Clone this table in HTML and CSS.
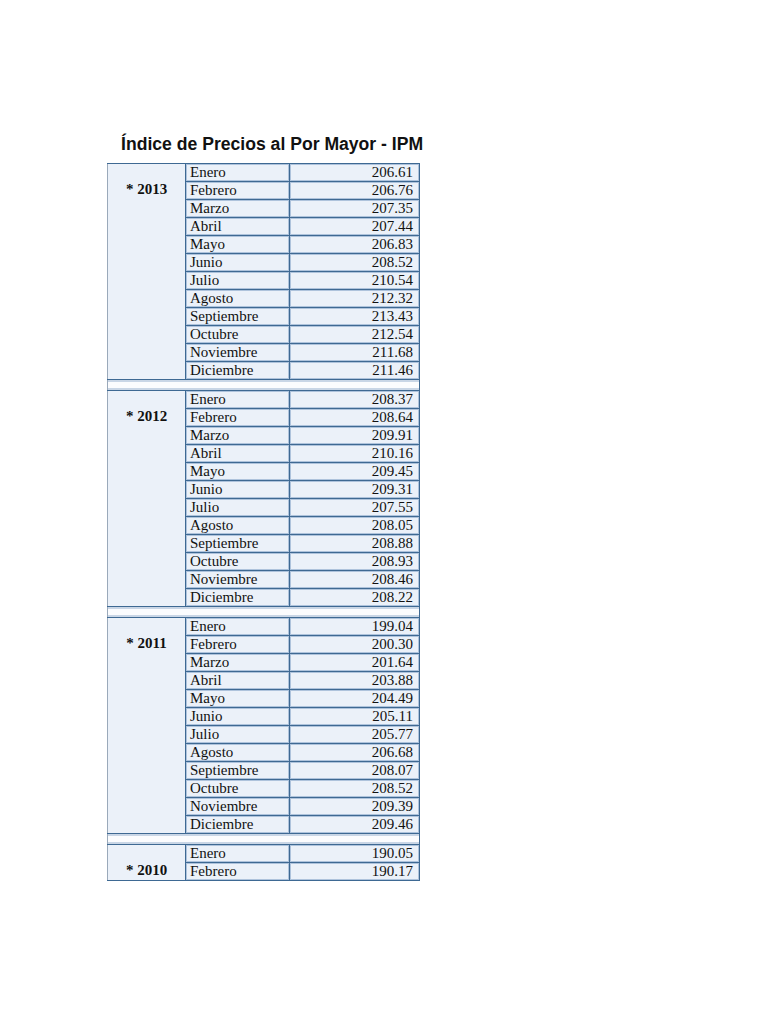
FILE: index.html
```html
<!DOCTYPE html>
<html lang="es">
<head>
<meta charset="utf-8">
<title>Índice de Precios al Por Mayor - IPM</title>
<link rel="stylesheet" href="styles.css">
</head>
<body>
<div class="page">
  <h1 class="title">Índice de Precios al Por Mayor - IPM</h1>
  <table class="ipm">
    <tbody>
      <tr><td class="year" rowspan="12">* 2013</td><td class="month">Enero</td><td class="val">206.61</td></tr>
      <tr><td class="month">Febrero</td><td class="val">206.76</td></tr>
      <tr><td class="month">Marzo</td><td class="val">207.35</td></tr>
      <tr><td class="month">Abril</td><td class="val">207.44</td></tr>
      <tr><td class="month">Mayo</td><td class="val">206.83</td></tr>
      <tr><td class="month">Junio</td><td class="val">208.52</td></tr>
      <tr><td class="month">Julio</td><td class="val">210.54</td></tr>
      <tr><td class="month">Agosto</td><td class="val">212.32</td></tr>
      <tr><td class="month">Septiembre</td><td class="val">213.43</td></tr>
      <tr><td class="month">Octubre</td><td class="val">212.54</td></tr>
      <tr><td class="month">Noviembre</td><td class="val">211.68</td></tr>
      <tr><td class="month">Diciembre</td><td class="val">211.46</td></tr>
      <tr class="sep"><td colspan="3"></td></tr>

      <tr><td class="year" rowspan="12">* 2012</td><td class="month">Enero</td><td class="val">208.37</td></tr>
      <tr><td class="month">Febrero</td><td class="val">208.64</td></tr>
      <tr><td class="month">Marzo</td><td class="val">209.91</td></tr>
      <tr><td class="month">Abril</td><td class="val">210.16</td></tr>
      <tr><td class="month">Mayo</td><td class="val">209.45</td></tr>
      <tr><td class="month">Junio</td><td class="val">209.31</td></tr>
      <tr><td class="month">Julio</td><td class="val">207.55</td></tr>
      <tr><td class="month">Agosto</td><td class="val">208.05</td></tr>
      <tr><td class="month">Septiembre</td><td class="val">208.88</td></tr>
      <tr><td class="month">Octubre</td><td class="val">208.93</td></tr>
      <tr><td class="month">Noviembre</td><td class="val">208.46</td></tr>
      <tr><td class="month">Diciembre</td><td class="val">208.22</td></tr>
      <tr class="sep"><td colspan="3"></td></tr>

      <tr><td class="year" rowspan="12">* 2011</td><td class="month">Enero</td><td class="val">199.04</td></tr>
      <tr><td class="month">Febrero</td><td class="val">200.30</td></tr>
      <tr><td class="month">Marzo</td><td class="val">201.64</td></tr>
      <tr><td class="month">Abril</td><td class="val">203.88</td></tr>
      <tr><td class="month">Mayo</td><td class="val">204.49</td></tr>
      <tr><td class="month">Junio</td><td class="val">205.11</td></tr>
      <tr><td class="month">Julio</td><td class="val">205.77</td></tr>
      <tr><td class="month">Agosto</td><td class="val">206.68</td></tr>
      <tr><td class="month">Septiembre</td><td class="val">208.07</td></tr>
      <tr><td class="month">Octubre</td><td class="val">208.52</td></tr>
      <tr><td class="month">Noviembre</td><td class="val">209.39</td></tr>
      <tr><td class="month">Diciembre</td><td class="val">209.46</td></tr>
      <tr class="sep"><td colspan="3"></td></tr>

      <tr><td class="year" rowspan="2">* 2010</td><td class="month">Enero</td><td class="val">190.05</td></tr>
      <tr><td class="month">Febrero</td><td class="val">190.17</td></tr>
    </tbody>
  </table>
</div>
</body>
</html>
```

FILE: styles.css
```css
html, body {
  margin: 0;
  padding: 0;
  background: #ffffff;
}

.page {
  padding: 133px 0 0 107px;
}

.title {
  margin: 0 0 8px 14px;
  font-family: "Liberation Sans", Arial, sans-serif;
  font-weight: bold;
  font-size: 17.6px;
  line-height: 22px;
  color: #111111;
}

.ipm {
  border-collapse: collapse;
  font-family: "Liberation Serif", "Times New Roman", serif;
  font-size: 15px;
  color: #111111;
  width: 313px;
  table-layout: fixed;
}

.ipm td {
  height: 17px;
  padding: 0;
  line-height: 17px;
  background: #ebf1f9;
  border: 1px solid #3e6993;
  box-shadow: inset 0 0 0 1px #aec3dc;
}

.ipm .year {
  width: 77px;
  vertical-align: top;
  text-align: center;
  font-weight: bold;
  font-size: 15px;
  padding-top: 17px;
  border-left: 1px solid #9aa9ba;
  box-shadow: none;
}

.ipm .month {
  width: 99px;
  padding-left: 4px;
}

.ipm .val {
  text-align: right;
  padding-right: 6px;
}

.ipm .sep td {
  height: 10px;
  line-height: 10px;
  background: #fbfcfe;
  border-left: 1px solid #9aa9ba;
  border-right: 1px solid #3e6993;
  box-shadow: inset 0 -2px 0 #c9d6e6, inset 0 2px 0 #c9d6e6;
}
```
